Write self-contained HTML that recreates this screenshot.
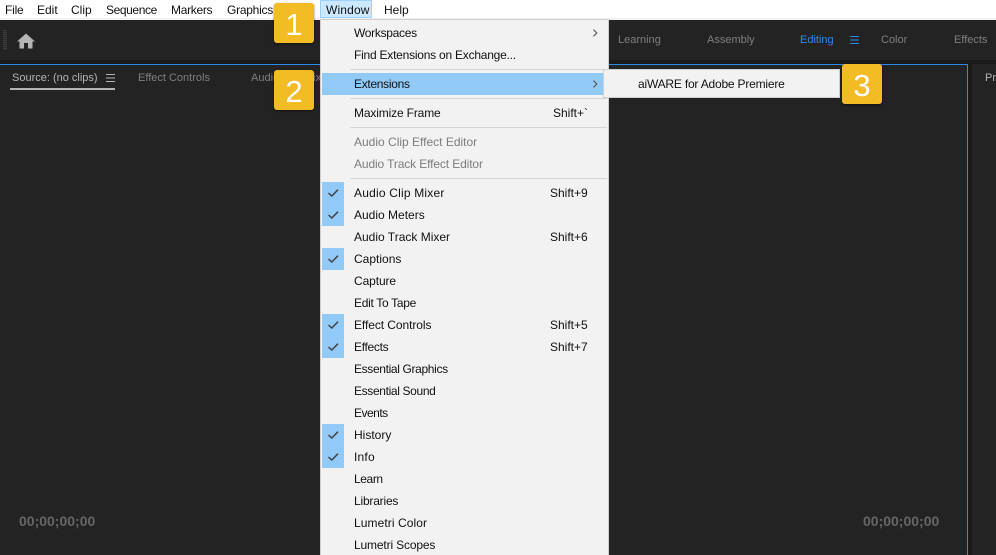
<!DOCTYPE html>
<html><head><meta charset="utf-8">
<style>
html,body{margin:0;padding:0;width:996px;height:555px;overflow:hidden;background:#232323}
body{position:relative;font-family:"Liberation Sans",sans-serif;font-size:12px;color:#1a1a1a}
div{position:absolute}
.t{white-space:nowrap;line-height:16px;height:16px}
.m{top:2px;color:#111;font-size:12px}
.d{color:#7f7f7f;font-size:11px}
.i{left:354px;color:#111}
.g{color:#7c7c7c}
.s{left:550px;color:#111}
.sep{left:350px;width:257px;height:1px;background:#d4d4d4}
.c{left:322px;width:22px;height:22px;background:#91c9f7}
.c svg{position:absolute;left:6px;top:7px}
.b{width:40px;height:40px;background:#f4bc24;border-radius:3px;box-shadow:0 1px 2px rgba(0,0,0,.55);color:#fff;font-size:31px;line-height:43px;text-align:center}
</style></head><body>
<div style="left:0;top:0;width:996px;height:18px;background:#fff"></div>
<div style="left:0;top:18px;width:996px;height:2px;background:#f0f0f0"></div>
<div style="left:0;top:20px;width:996px;height:40px;background:#232323"></div>
<div style="left:0;top:60px;width:996px;height:4px;background:#1a1a1a"></div>
<div style="left:0;top:64px;width:967px;height:1px;background:#2d8ceb"></div>
<div style="left:967px;top:64px;width:1px;height:491px;background:#2d8ceb"></div>
<div style="left:968px;top:64px;width:4px;height:491px;background:#1a1a1a"></div>
<div style="left:972px;top:64px;width:24px;height:491px;background:#232323"></div>
<div style="left:3px;top:30px;width:4px;height:20px;background:repeating-linear-gradient(#3c3c3c 0 1px,#2a2a2a 1px 2px)"></div>

<div class="t m" style="left:5px;letter-spacing:-.2px">File</div>
<div class="t m" style="left:37px">Edit</div>
<div class="t m" style="left:71px">Clip</div>
<div class="t m" style="left:106px;letter-spacing:-.4px">Sequence</div>
<div class="t m" style="left:171px;letter-spacing:-.3px">Markers</div>
<div class="t m" style="left:227px;letter-spacing:-.25px">Graphics</div>
<div style="left:320px;top:0;width:52px;height:18px;background:#cce8ff;border:1px solid #99d1ff;box-sizing:border-box"></div>
<div class="t m" style="left:326px;letter-spacing:.15px">Window</div>
<div class="t m" style="left:384px">Help</div>

<svg style="position:absolute;left:17px;top:33px" width="18" height="16" viewBox="0 0 18 16"><path d="M9 0.5 L18 8.5 H15.5 V15.5 H11 V10 H7 V15.5 H2.5 V8.5 H0 Z" fill="#b4b4b4"/></svg>

<div class="t d" style="left:618px;top:32px">Learning</div>
<div class="t d" style="left:707px;top:32px">Assembly</div>
<div class="t" style="left:800px;top:32px;color:#2d8ceb;font-size:11px">Editing</div>
<svg style="position:absolute;left:850px;top:36px" width="9" height="8"><path d="M0 .5H9M0 4H9M0 7.5H9" stroke="#2d8ceb" stroke-width="1"/></svg>
<div class="t d" style="left:881px;top:32px">Color</div>
<div class="t d" style="left:954px;top:32px">Effects</div>

<div class="t" style="left:12px;top:70px;color:#b4b4b4;font-size:11px">Source: (no clips)</div>
<svg style="position:absolute;left:106px;top:74px" width="9" height="8"><path d="M0 .5H9M0 4H9M0 7.5H9" stroke="#b4b4b4" stroke-width="1"/></svg>
<div style="left:10px;top:88px;width:105px;height:2px;background:#b4b4b4"></div>
<div class="t d" style="left:138px;top:70px">Effect Controls</div>
<div class="t d" style="left:251px;top:70px">Audio Clip Mixer</div>
<div class="t" style="left:985px;top:70px;color:#b4b4b4;font-size:11px">Pr</div>
<div class="t" style="left:19px;top:513px;color:#666;font-size:14px;font-weight:bold">00;00;00;00</div>
<div class="t" style="left:863px;top:513px;color:#666;font-size:14px;font-weight:bold">00;00;00;00</div>

<!-- menu -->
<div style="left:320px;top:19px;width:289px;height:536px;background:#f2f2f2;border:1px solid #cfcfcf;border-bottom:0;box-sizing:border-box"></div>
<div style="left:322px;top:73px;width:282px;height:22px;background:#91c9f7"></div>

<div class="t i" style="top:25px;letter-spacing:-.3px">Workspaces</div>
<svg style="position:absolute;left:592px;top:29px" width="6" height="8"><path d="M1.5 .7 L4.8 4 L1.5 7.3" fill="none" stroke="#555" stroke-width="1.1"/></svg>
<div class="t i" style="top:47px;letter-spacing:-.23px">Find Extensions on Exchange...</div>
<div class="sep" style="top:69px"></div>
<div class="t i" style="top:76px;letter-spacing:-.3px">Extensions</div>
<svg style="position:absolute;left:592px;top:80px" width="6" height="8"><path d="M1.5 .7 L4.8 4 L1.5 7.3" fill="none" stroke="#555" stroke-width="1.1"/></svg>
<div class="sep" style="top:98px"></div>
<div class="t i" style="top:105px;letter-spacing:-.15px">Maximize Frame</div>
<div class="t s" style="top:105px;left:553px">Shift+`</div>
<div class="sep" style="top:127px"></div>
<div class="t i g" style="top:134px">Audio Clip Effect Editor</div>
<div class="t i g" style="top:156px;letter-spacing:-.12px">Audio Track Effect Editor</div>
<div class="sep" style="top:178px"></div>

<div class="c" style="top:182px"><svg width="11" height="8"><path d="M.5 4 L3.8 7 L10 .7" fill="none" stroke="#444" stroke-width="1.5"/></svg></div>
<div class="c" style="top:204px"><svg width="11" height="8"><path d="M.5 4 L3.8 7 L10 .7" fill="none" stroke="#444" stroke-width="1.5"/></svg></div>
<div class="c" style="top:248px"><svg width="11" height="8"><path d="M.5 4 L3.8 7 L10 .7" fill="none" stroke="#444" stroke-width="1.5"/></svg></div>
<div class="c" style="top:314px"><svg width="11" height="8"><path d="M.5 4 L3.8 7 L10 .7" fill="none" stroke="#444" stroke-width="1.5"/></svg></div>
<div class="c" style="top:336px"><svg width="11" height="8"><path d="M.5 4 L3.8 7 L10 .7" fill="none" stroke="#444" stroke-width="1.5"/></svg></div>
<div class="c" style="top:424px"><svg width="11" height="8"><path d="M.5 4 L3.8 7 L10 .7" fill="none" stroke="#444" stroke-width="1.5"/></svg></div>
<div class="c" style="top:446px"><svg width="11" height="8"><path d="M.5 4 L3.8 7 L10 .7" fill="none" stroke="#444" stroke-width="1.5"/></svg></div>

<div class="t i" style="top:185px;letter-spacing:.2px">Audio Clip Mixer</div><div class="t s" style="top:185px">Shift+9</div>
<div class="t i" style="top:207px">Audio Meters</div>
<div class="t i" style="top:229px">Audio Track Mixer</div><div class="t s" style="top:229px">Shift+6</div>
<div class="t i" style="top:251px">Captions</div>
<div class="t i" style="top:273px;letter-spacing:-.1px">Capture</div>
<div class="t i" style="top:295px;letter-spacing:-.3px">Edit To Tape</div>
<div class="t i" style="top:317px;letter-spacing:-.07px">Effect Controls</div><div class="t s" style="top:317px">Shift+5</div>
<div class="t i" style="top:339px;letter-spacing:-.3px">Effects</div><div class="t s" style="top:339px">Shift+7</div>
<div class="t i" style="top:361px;letter-spacing:-.35px">Essential Graphics</div>
<div class="t i" style="top:383px;letter-spacing:-.35px">Essential Sound</div>
<div class="t i" style="top:405px;letter-spacing:-.5px">Events</div>
<div class="t i" style="top:427px">History</div>
<div class="t i" style="top:449px;letter-spacing:.2px">Info</div>
<div class="t i" style="top:471px;letter-spacing:-.4px">Learn</div>
<div class="t i" style="top:493px;letter-spacing:-.2px">Libraries</div>
<div class="t i" style="top:515px;letter-spacing:.08px">Lumetri Color</div>
<div class="t i" style="top:537px;letter-spacing:-.15px">Lumetri Scopes</div>

<!-- submenu -->
<div style="left:603px;top:69px;width:237px;height:29px;background:#f2f2f2;border:1px solid #cfcfcf;box-sizing:border-box"></div>
<div class="t" style="left:638px;top:76px;color:#111;letter-spacing:-.2px">aiWARE for Adobe Premiere</div>

<!-- badges -->
<div class="b" style="left:274px;top:3px">1</div>
<div class="b" style="left:274px;top:70px">2</div>
<div class="b" style="left:842px;top:64px">3</div>
</body></html>
